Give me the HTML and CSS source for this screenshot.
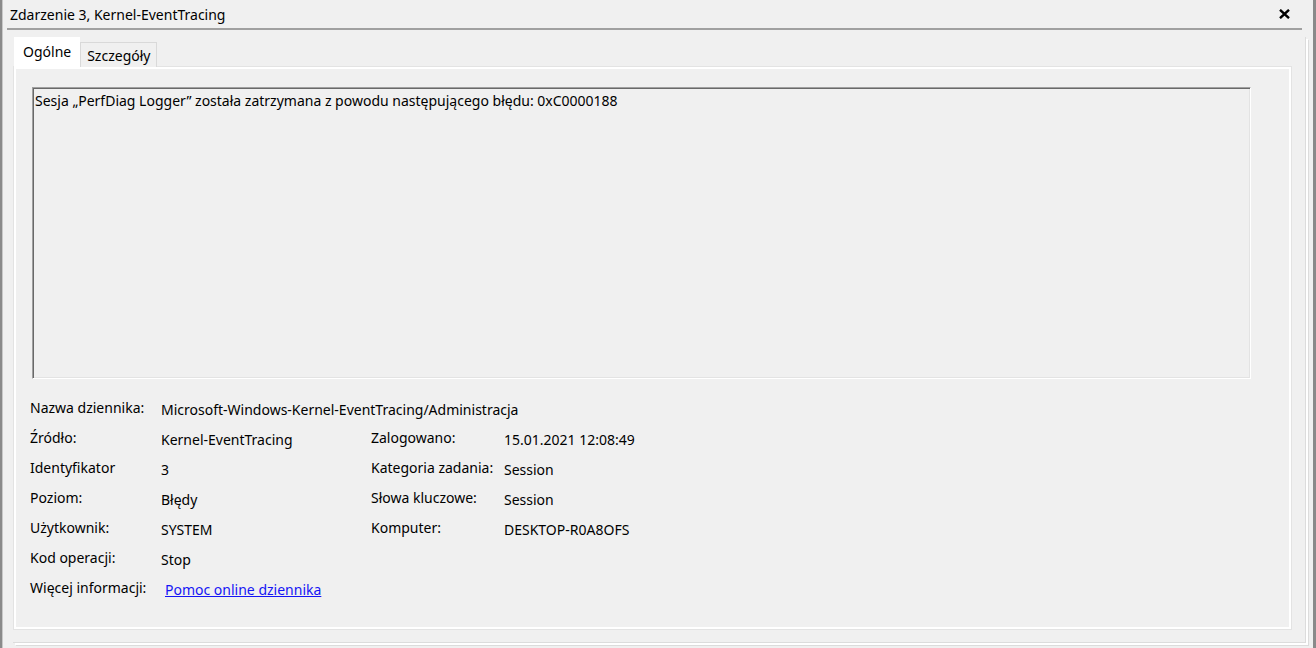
FILE: index.html
```html
<!DOCTYPE html>
<html lang="pl">
<head>
    <meta charset="UTF-8">
    <title>Zdarzenie 3, Kernel-EventTracing</title>
    <link rel="stylesheet" href="styles.css">
</head>
<body>
    <div class="window">
        <div class="titlebar">
            <span class="title">Zdarzenie 3, Kernel-EventTracing</span>
            <svg class="close" width="11" height="10" viewBox="0 0 11 10">
                <path d="M1 0.8 L10 9.2 M10 0.8 L1 9.2" stroke="#000" stroke-width="2.4" fill="none"/>
            </svg>
        </div>

        <div class="frame">
            <div class="tabs">
                <div class="tab active">Ogólne</div>
                <div class="tab">Szczegóły</div>
            </div>
            <div class="panel">
                <div class="message">Sesja „PerfDiag Logger” została zatrzymana z powodu następującego błędu: 0xC0000188</div>

                <div class="fields">
                    <div class="label">Nazwa dziennika:</div>
                    <div class="value wide">Microsoft-Windows-Kernel-EventTracing/Administracja</div>

                    <div class="label">Źródło:</div>
                    <div class="value">Kernel-EventTracing</div>
                    <div class="label">Zalogowano:</div>
                    <div class="value">15.01.2021 12:08:49</div>

                    <div class="label">Identyfikator</div>
                    <div class="value">3</div>
                    <div class="label">Kategoria zadania:</div>
                    <div class="value">Session</div>

                    <div class="label">Poziom:</div>
                    <div class="value">Błędy</div>
                    <div class="label">Słowa kluczowe:</div>
                    <div class="value">Session</div>

                    <div class="label">Użytkownik:</div>
                    <div class="value">SYSTEM</div>
                    <div class="label">Komputer:</div>
                    <div class="value">DESKTOP-R0A8OFS</div>

                    <div class="label">Kod operacji:</div>
                    <div class="value wide">Stop</div>

                    <div class="label">Więcej informacji:</div>
                    <div class="value wide"><a class="link" href="#">Pomoc online dziennika</a></div>
                </div>
            </div>
        </div>
    </div>
</body>
</html>
```

FILE: styles.css
```css
body {
    margin: 0;
    background: #f0f0f0;
    font-family: "Noto Sans", "Liberation Sans", sans-serif;
    font-size: 14px;
    color: #000;
}
.window {
    width: 1316px;
    height: 648px;
    box-sizing: border-box;
    border-left: 2px solid #8a8a8a;
    border-right: 3px solid #8a8a8a;
    box-shadow: inset 1px 0 0 #c8c8c8;
}
.titlebar {
    height: 28px;
    margin: 0 11px 0 5px;
    padding: 0 12px 0 3px;
    border-bottom: 2px solid #a0a0a0;
    display: flex;
    align-items: center;
    justify-content: space-between;
}
.close {
    display: block;
}
.frame {
    margin: 7px 7px 0 11px;
    padding: 0 13px 12px 0;
    border-right: 1px solid #dcdcdc;
    border-bottom: 1px solid #dcdcdc;
    box-shadow: 2px 2px 0 #fff, 3px 3px 0 #dcdcdc;
}
.tabs {
    display: flex;
    align-items: flex-end;
    padding-left: 1px;
    position: relative;
    z-index: 1;
    margin-bottom: -1px;
}
.tab {
    height: 25px;
    line-height: 26px;
    padding: 0 6px;
    border: 1px solid #d9d9d9;
    border-bottom: none;
    background: #f0f0f0;
    box-sizing: border-box;
}
.tab.active {
    height: 30px;
    line-height: 28px;
    padding: 0 8px;
    background: #fff;
    border-color: #fff;
}
.panel {
    height: 564px;
    box-sizing: border-box;
    border: 1px solid #e3e3e3;
    box-shadow: inset 0 0 0 2px #fff;
    padding: 20px 40px 0 16px;
}
.message {
    margin-left: 2px;
    height: 292px;
    box-sizing: border-box;
    border-top: 1px solid #a0a0a0;
    border-left: 1px solid #a0a0a0;
    border-right: 1px solid #fff;
    border-bottom: 1px solid #fff;
    box-shadow: inset 1px 1px 0 #696969, inset -1px -1px 0 #e3e3e3;
    padding: 3px 2px;
    line-height: 19px;
}
.fields {
    margin-top: 14px;
    display: grid;
    grid-template-columns: 131px 210px 133px 1fr;
    grid-auto-rows: 30px;
    align-items: center;
}
.label {
    padding-bottom: 1px;
}
.value {
    padding-top: 2px;
}
.value.wide {
    grid-column: 2 / 5;
}
.link {
    margin-left: 4px;
    color: #1515f5;
    text-decoration: underline;
}
```
